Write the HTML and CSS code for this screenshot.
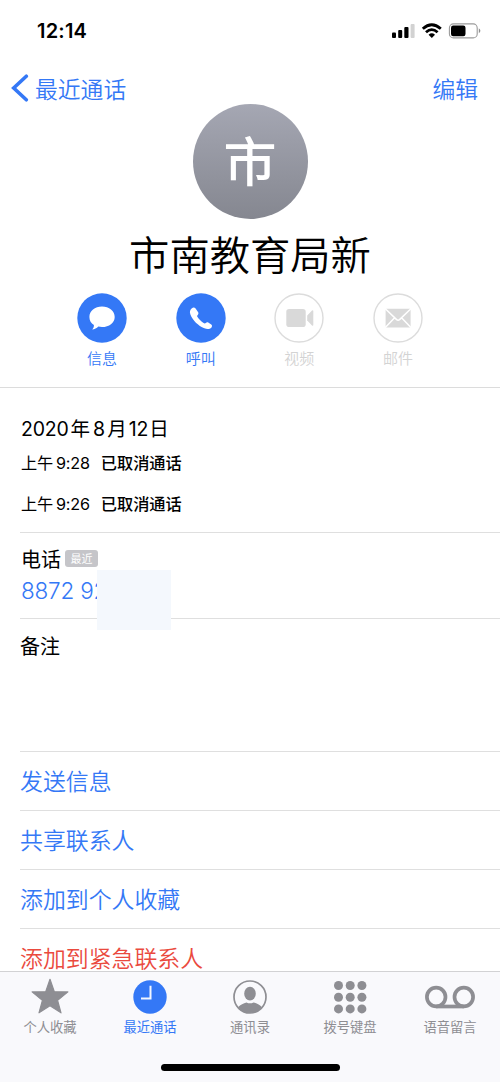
FILE: index.html
```html
<!DOCTYPE html>
<html lang="zh-CN">
<head>
<meta charset="utf-8">
<title>联系人</title>
<link rel="stylesheet" href="styles.css">
</head>
<body>
<div class="phone">
  <header class="status">
    <span class="clock">12:14</span>
    <svg class="signals" width="90" height="18" viewBox="0 0 90 18">
      <rect x="0" y="10.5" width="4" height="5.5" rx="1"/>
      <rect x="6.2" y="8" width="4" height="8" rx="1"/>
      <rect x="12.3" y="5" width="4.2" height="11" rx="1"/>
      <rect x="18.6" y="2" width="4" height="14" rx="1" fill="#d2d2d2"/>
      <g fill="none" stroke="#000" stroke-width="2.8">
        <path d="M30.8 6.8Q39.7-1.3 48.8 6.8"/>
        <path d="M34 10.2Q39.7 5 45.6 10.2"/>
      </g>
      <path d="M36.6 12.7Q39.8 10 43 12.7L39.8 16Z"/>
      <rect x="57.4" y="1.9" width="27.800" height="14" rx="4" fill="none" stroke="#9b9b9b" stroke-width="1.1"/>
      <rect x="59" y="3.600" width="14.5" height="10.600" rx="2.2"/>
      <path d="M86.800 6.3Q90 8.800 86.800 11.300Z" fill="#8e8e8e"/>
    </svg>
  </header>

  <nav class="nav">
    <a class="back">
      <svg width="18" height="28" viewBox="0 0 18 28"><path d="M15.300 2.200L2.700 14L15.300 25.800" fill="none" stroke="#3478f6" stroke-width="3.600" stroke-linecap="round" stroke-linejoin="miter"/></svg>
      <span>最近通话</span>
    </a>
    <a class="edit">编辑</a>
  </nav>

  <section class="profile">
    <div class="avatar">市</div>
    <h1 class="name">市南教育局新</h1>
    <div class="actions">
      <div class="action">
        <svg width="50" height="50" viewBox="0 0 50 50">
          <circle cx="25" cy="25" r="24.700" fill="#3478f6"/>
          <path d="M25 13.600C32.100 13.600 37.700 17.900 37.700 23.900S32.100 34 25 34C23.700 34 22.500 33.900 21.300 33.600C19.700 35.200 17.600 36.500 15.200 36.600C16.500 35.300 17 33.800 16.900 32C14.100 30.200 12.400 27.300 12.400 23.900C12.400 17.900 17.900 13.600 25 13.600Z" fill="#fff"/>
        </svg>
        <span>信息</span>
      </div>
      <div class="action">
        <svg width="50" height="50" viewBox="0 0 50 50">
          <circle cx="25" cy="25" r="24.700" fill="#3478f6"/>
          <path d="M15.900 15.200C17.100 14.300 18.700 14.400 19.600 15.500L22 19C22.700 20.100 22.500 21.100 21.700 21.900C21 22.600 21 23.200 21.500 24C23.100 26.400 25.200 28.500 27.600 30C28.500 30.600 29.200 30.500 29.800 29.900C30.600 29.100 31.600 29 32.600 29.700L35.300 31.600C36.200 32.400 36.300 33.500 35.500 34.400C33.800 36.200 31.300 36.600 28.400 35.300C22.100 32.600 16.700 27.300 14.400 21.400C13.400 18.800 14 16.700 15.900 15.200Z" fill="#fff"/>
        </svg>
        <span>呼叫</span>
      </div>
      <div class="action off">
        <svg width="50" height="50" viewBox="0 0 50 50">
          <circle cx="25" cy="25" r="24" fill="none" stroke="#dcdcdc" stroke-width="1.400"/>
          <rect x="12.300" y="16" width="19.400" height="18" rx="2.800" fill="#d9d9d9"/>
          <path d="M33.200 22.600L38 17.600Q39.300 16.600 39.300 18.200V31.800Q39.300 33.400 38 32.400L33.200 27.400Z" fill="#d9d9d9"/>
        </svg>
        <span>视频</span>
      </div>
      <div class="action off">
        <svg width="50" height="50" viewBox="0 0 50 50">
          <circle cx="25" cy="25" r="24" fill="none" stroke="#dcdcdc" stroke-width="1.400"/>
          <rect x="12.600" y="15.800" width="25" height="18.600" rx="1" fill="#d9d9d9"/>
          <path d="M12.300 15.800L23.400 26.400Q25.100 28 26.800 26.400L37.900 15.800M12.300 34.600L21.400 25M37.900 34.600L28.800 25" fill="none" stroke="#fff" stroke-width="1.500"/>
        </svg>
        <span>邮件</span>
      </div>
    </div>
  </section>

  <main class="details">
    <section class="calls">
      <h2 class="date"><span class="year">2020</span>年<span class="month">8</span>月<span class="day">12</span>日</h2>
      <div class="call"><span class="time">上午<span class="digits">9:28</span></span><strong>已取消通话</strong></div>
      <div class="call"><span class="time">上午<span class="digits">9:26</span></span><strong>已取消通话</strong></div>
    </section>
    <section class="number">
      <div class="label">电话<span class="tag">最近</span></div>
      <div class="phone-number">8872 92<span class="mask"></span></div>
    </section>
    <section class="notes">备注</section>
    <a class="link">发送信息</a>
    <a class="link">共享联系人</a>
    <a class="link">添加到个人收藏</a>
    <a class="link danger">添加到紧急联系人</a>
  </main>

  <footer class="dock">
    <div class="tabs">
      <div class="tab">
        <svg width="50" height="38" viewBox="0 0 50 38"><path d="M25 2.300L29.300 14.700L42.900 14.900L32.600 23.400L36 35.800L25 28.800L14 35.800L17.400 23.400L7.100 14.900L20.700 14.700Z" fill="#8e8e93" stroke="#8e8e93" stroke-width="1.200" stroke-linejoin="round"/></svg>
        <span>个人收藏</span>
      </div>
      <div class="tab active">
        <svg width="50" height="38" viewBox="0 0 50 38"><circle cx="25" cy="20" r="16.700" fill="#3478f6"/><path d="M25.500 8.700V21.500H16" fill="none" stroke="#f2f6ff" stroke-width="2"/></svg>
        <span>最近通话</span>
      </div>
      <div class="tab">
        <svg width="50" height="38" viewBox="0 0 50 38"><circle cx="25" cy="20" r="16" fill="none" stroke="#8e8e93" stroke-width="1.700"/><ellipse cx="25" cy="16.700" rx="5.800" ry="6.900" fill="#8e8e93"/><path d="M13 30.200C15.500 27.400 18.500 26.200 21.500 25.400Q25 27.300 28.500 25.400C31.500 26.200 34.500 27.400 37 30.200C34 33.900 30 36 25 36S16 33.900 13 30.200Z" fill="#8e8e93"/></svg>
        <span>通讯录</span>
      </div>
      <div class="tab">
        <svg width="50" height="38" viewBox="0 0 50 38" fill="#8e8e93">
          <circle cx="13.500" cy="8.500" r="4.500"/><circle cx="25.200" cy="8.500" r="4.500"/><circle cx="36.900" cy="8.500" r="4.500"/>
          <circle cx="13.500" cy="20.200" r="4.500"/><circle cx="25.200" cy="20.200" r="4.500"/><circle cx="36.900" cy="20.200" r="4.500"/>
          <circle cx="13.500" cy="31.900" r="4.500"/><circle cx="25.200" cy="31.900" r="4.500"/><circle cx="36.900" cy="31.900" r="4.500"/>
        </svg>
        <span>拨号键盘</span>
      </div>
      <div class="tab">
        <svg width="52" height="38" viewBox="0 0 52 38" fill="none" stroke="#8e8e93" stroke-width="3.700"><circle cx="12.200" cy="20" r="9.300"/><circle cx="39.800" cy="20" r="9.300"/><path d="M12.200 29.500H39.800"/></svg>
        <span>语音留言</span>
      </div>
    </div>
    <div class="home"></div>
  </footer>
</div>
</body>
</html>
```
FILE: styles.css
```css
* { box-sizing: border-box; }
body {
  margin: 0;
  background: #fff;
  color: #000;
  font-family: Inter, "Noto Sans CJK SC", sans-serif;
}
svg { display: block; flex: none; }
.phone {
  width: 500px;
  height: 1082px;
  display: flex;
  flex-direction: column;
  overflow: hidden;
}
.status {
  height: 62px;
  flex: none;
  display: flex;
  align-items: center;
  justify-content: space-between;
  padding: 0 18px 0 37px;
}
.clock { font-size: 20px; font-weight: 600; letter-spacing: .2px; }
.nav {
  height: 42px;
  flex: none;
  display: flex;
  justify-content: space-between;
  padding: 12px 22px 0 11px;
  color: #3478f6;
  font-size: 22.800px;
  line-height: 31px;
  font-weight: 350;
}
.back { display: flex; gap: 6px; }
.profile {
  height: 284px;
  flex: none;
  display: flex;
  flex-direction: column;
  align-items: center;
  border-bottom: 1px solid #dcdcdc;
}
.avatar {
  width: 115px;
  height: 115px;
  flex: none;
  border-radius: 50%;
  background: linear-gradient(#a5a7b3, #858790);
  color: #fff;
  font-size: 53px;
  font-weight: 500;
  line-height: 118px;
  text-align: center;
}
.name {
  margin: 12px 0 0;
  font-size: 40.300px;
  font-weight: 350;
  line-height: 50px;
}
.actions {
  display: grid;
  grid-template-columns: repeat(4, 98.700px);
  margin-top: 12px;
}
.action {
  display: flex;
  flex-direction: column;
  align-items: center;
  gap: 6px;
  color: #3478f6;
  font-size: 15px;
  font-weight: 350;
  line-height: 20px;
}
.action.off { color: #d3d3d3; }
.details {
  flex: 1;
  min-height: 0;
  padding-left: 20px;
}
.calls { height: 145px; padding: 28px 0 0 1px; border-bottom: 1px solid #dfdfdf; }
.date {
  margin: 0;
  font-size: 19.500px;
  font-weight: 400;
  line-height: 27px;
}
.year { margin-right: 2px; letter-spacing: -.2px; }
.month { margin: 0 2px 0 3px; }
.day { margin: 0 1px 0 2px; letter-spacing: -.2px; }
.call {
  display: flex;
  gap: 11px;
  height: 40.500px;
  font-size: 16.200px;
  line-height: 41px;
}
.time { letter-spacing: -.2px; }
.call strong { font-weight: 500; }
.digits { margin-left: 3px; }
.number { height: 86px; padding: 13px 0 0 1px; border-bottom: 1px solid #dfdfdf; }
.label {
  display: flex;
  align-items: center;
  gap: 4px;
  font-size: 20px;
  line-height: 28px;
}
.tag {
  width: 33px;
  height: 17px;
  margin-bottom: 4px;
  border-radius: 3px;
  background: #c5c5c9;
  color: #fff;
  font-size: 11px;
  line-height: 18px;
  text-align: center;
}
.phone-number {
  position: relative;
  color: #3478f6;
  font-size: 22.500px;
  font-weight: 350;
  letter-spacing: -.2px;
  line-height: 34px;
}
.mask {
  position: absolute;
  left: 76px;
  top: -4px;
  width: 74px;
  height: 60px;
  background: #f4f8fd;
}
.notes {
  height: 133px;
  padding: 14px 0 0;
  border-bottom: 1px solid #dfdfdf;
  font-size: 20px;
  line-height: 28px;
}
.link {
  display: block;
  height: 59px;
  padding: 1px 0 0;
  border-bottom: 1px solid #dfdfdf;
  color: #3478f6;
  font-size: 22.900px;
  font-weight: 350;
  line-height: 59px;
}
.link.danger {
  height: 42px;
  border-bottom: 0;
  color: #ea4a3e;
}
.dock {
  height: 111px;
  flex: none;
  border-top: 1px solid #d2d2d4;
  background: #f9f9fc;
}
.tabs {
  display: grid;
  grid-template-columns: repeat(5, 100px);
  height: 92px;
  padding-top: 5px;
}
.tab {
  display: flex;
  flex-direction: column;
  align-items: center;
  gap: 2px;
  color: #8e8e93;
  font-size: 13.300px;
  line-height: 20px;
}
.tab.active { color: #3478f6; }
.home {
  width: 179px;
  height: 7px;
  margin: 0 auto 0 161px;
  border-radius: 4px;
  background: #000;
}
```
